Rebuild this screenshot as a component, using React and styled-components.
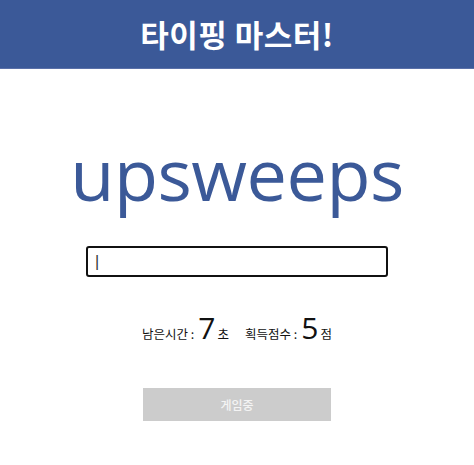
import React from "react";
import styled, { createGlobalStyle } from "styled-components";

const Global = createGlobalStyle`
  html, body { margin: 0; padding: 0; background: #fff; }
  body { font-family: "Open Sans", "Noto Sans CJK KR", sans-serif; }
`;

const Page = styled.div`
  width: 474px;
  height: 465px;
  display: flex;
  flex-direction: column;
  align-items: center;
  background: #fff;
`;

const Header = styled.header`
  width: 100%;
  height: 69px;
  background: #3b5998;
  display: flex;
  align-items: center;
  justify-content: center;
  border-bottom: 1px solid #5a70a8;
  box-sizing: border-box;
`;

const Title = styled.h1`
  margin: 0;
  color: #fff;
  font-family: "Noto Sans CJK KR", sans-serif;
  font-weight: 700;
  font-size: 31px;
  letter-spacing: 0.5px;
  line-height: 1;
  transform: translateY(-1px);
`;

const Word = styled.div`
  margin-top: 54px;
  color: #3b5998;
  font-family: "Open Sans", sans-serif;
  font-size: 72px;
  line-height: 100px;
  letter-spacing: -0.5px;
`;

const Input = styled.input`
  margin-top: 23px;
  width: 302px;
  height: 31px;
  box-sizing: border-box;
  border: 2px solid #111;
  border-radius: 3px;
  padding: 0 7px;
  font-size: 16px;
  color: #333;
  outline: none;
`;

const Status = styled.div`
  margin-top: 36px;
  display: flex;
  align-items: baseline;
  font-family: "Noto Sans CJK KR", sans-serif;
  font-size: 12.5px;
  color: #111;
`;

const Group = styled.span`
  display: inline-flex;
  align-items: baseline;
  margin-left: ${(p) => p.$gap || 0}px;
`;

const Big = styled.span`
  font-family: "Open Sans", sans-serif;
  font-size: 30px;
  margin: 0 2px 0 4px;
  line-height: 1;
`;

const Button = styled.button`
  margin-top: 45px;
  width: 188px;
  height: 33px;
  border: none;
  background: #cccccc;
  color: #f4f4f4;
  font-family: "Noto Sans CJK KR", sans-serif;
  font-size: 12px;
  font-weight: 500;
`;

export default function App() {
  return (
    <Page>
      <Global />
      <Header>
        <Title>타이핑 마스터!</Title>
      </Header>
      <Word>upsweeps</Word>
      <Input defaultValue="|" readOnly />
      <Status>
        <Group>
          남은시간 :<Big>7</Big>초
        </Group>
        <Group $gap={16}>
          획득점수 :<Big>5</Big>점
        </Group>
      </Status>
      <Button disabled>게임중</Button>
    </Page>
  );
}
